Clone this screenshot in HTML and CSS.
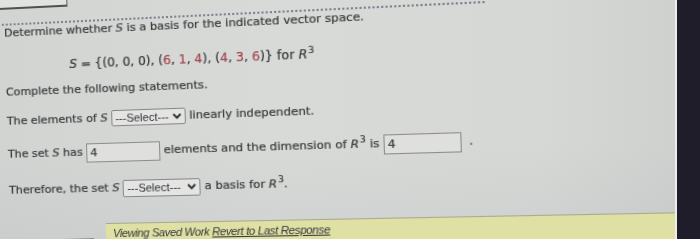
FILE: index.html
```html
<!DOCTYPE html>
<html lang="en">
<head>
<meta charset="utf-8">
<title>Basis question</title>
<link rel="stylesheet" href="styles.css">
</head>
<body>
<div class="screen">
  <div class="main">
    <div class="page">
      <div class="topbtn"></div>
      <div class="question">
        <p class="prompt">Determine whether <i>S</i> is a basis for the indicated vector space.</p>
        <p class="math"><i>S</i> = {(0, 0, 0), (<span class="red">6</span>, <span class="red">1</span>, <span class="red">4</span>), (<span class="red">4</span>, <span class="red">3</span>, <span class="red">6</span>)} for <i>R</i><sup>3</sup></p>
        <p class="complete">Complete the following statements.</p>
        <div class="row r1">The elements of <i>S</i> <span class="select"><span>---Select---</span><svg width="9" height="6" viewBox="0 0 9 6"><path d="M1 1 L4.5 4.6 L8 1" fill="none" stroke="#2c2c2c" stroke-width="1.8"/></svg></span> linearly independent.</div>
        <div class="row r2">The set <i>S</i> has <span class="input">4</span> elements and the dimension of <i>R</i><sup>3</sup> is <span class="input wide">4</span> &nbsp;.</div>
        <div class="row r3">Therefore, the set <i>S</i> <span class="select"><span>---Select---</span><svg width="9" height="6" viewBox="0 0 9 6"><path d="M1 1 L4.5 4.6 L8 1" fill="none" stroke="#2c2c2c" stroke-width="1.8"/></svg></span> a basis for <i>R</i><sup>3</sup>.</div>
      </div>
      <div class="footer">
        <div class="bottombtn"></div>
        <div class="saved"><i>Viewing Saved Work</i> <span class="revert">Revert to Last Response</span></div>
      </div>
    </div>
  </div>
  <div class="edge"></div>
</div>
</body>
</html>
```
FILE: styles.css
```css
html, body {
  margin: 0;
  padding: 0;
  background: #1f1d29;
}
.screen {
  display: flex;
  width: 700px;
  height: 239px;
  overflow: hidden;
}
.main {
  width: 675px;
  height: 239px;
  overflow: hidden;
  background:
    linear-gradient(180deg, rgba(255,255,255,0) 60%, rgba(150,156,170,0.12) 100%),
    linear-gradient(90deg, #d2d4d2 0%, #d8dad7 40%, #d6d8d5 80%, #cfd1cf 100%);
  border-right: 2px solid #eceded;
}
.edge {
  flex: 1;
  background: #1f1d29;
}
.page {
  width: 700px;
  padding-left: 7px;
  transform: perspective(1500px) rotateY(-12deg) rotate(-1.9deg);
  transform-origin: 0 120px;
  font-family: "DejaVu Sans", Verdana, sans-serif;
  font-size: 11.2px;
  color: #37383b;
  -webkit-text-stroke: 0.2px #37383b;
}
.topbtn {
  width: 76px;
  height: 9px;
  margin-left: -12px;
  margin-top: -1px;
  background: #e2e3e1;
  border-right: 1px solid #5c5d60;
  border-bottom: 2px solid #4f5054;
}
.question {
  width: 460px;
  margin-left: -7px;
  padding-left: 7px;
  margin-top: 14px;
  border-top: 2px dotted #7f8190;
}
.question p {
  margin: 0;
}
.question .prompt {
  margin-top: 1px;
  line-height: 14px;
}
.question .math {
  margin-top: 19px;
  margin-left: 65px;
  line-height: 14px;
  font-size: 12px;
  letter-spacing: 0;
}
.red {
  color: #a4424e;
  -webkit-text-stroke-color: #a4424e;
}
sup {
  font-size: 8.5px;
  line-height: 0;
  vertical-align: 5px;
  margin-left: 1px;
}
.question .complete {
  margin-top: 12px;
  line-height: 14px;
}
.row {
  white-space: nowrap;
}
.r1 {
  margin-top: 13px;
  height: 18px;
  line-height: 18px;
}
.r2 {
  margin-top: 14px;
  height: 20px;
  line-height: 20px;
}
.r3 {
  margin-top: 17px;
  height: 18px;
  line-height: 18px;
}
.select {
  display: inline-flex;
  align-items: center;
  justify-content: space-between;
  vertical-align: middle;
  box-sizing: border-box;
  width: 73px;
  height: 16px;
  padding: 0 3px;
  border: 1px solid #85878a;
  border-radius: 2px;
  background: #e4e5e3;
  font-family: "Liberation Sans", Arial, sans-serif;
  font-size: 11px;
  line-height: 14px;
  color: #2f3033;
  -webkit-text-stroke: 0;
}
.r3 .select {
  height: 17px;
  width: 76px;
}
.input {
  display: inline-block;
  vertical-align: middle;
  box-sizing: border-box;
  width: 73px;
  height: 19px;
  line-height: 17px;
  padding-left: 3px;
  border: 1px solid #8a8c8e;
  background: #dfe0de;
  color: #3a3b3d;
}
.input.wide {
  width: 71px;
  height: 19px;
}
.footer {
  display: flex;
  margin-top: 25px;
}
.bottombtn {
  width: 70px;
  height: 10px;
  margin-left: 14px;
  margin-top: 15px;
  background: #cfd1d2;
  border-top: 2px solid #4b4c50;
}
.saved {
  margin-left: 12px;
  width: 560px;
  height: 30px;
  box-sizing: border-box;
  padding: 3px 7px 0;
  background: #dfe1a4;
  border-top: 1px solid #a8aa8c;
  font-family: "Liberation Sans", Arial, sans-serif;
  font-size: 11px;
  letter-spacing: -0.4px;
  font-style: italic;
  color: #36373a;
  -webkit-text-stroke: 0;
}
.revert {
  text-decoration: underline;
}
```
